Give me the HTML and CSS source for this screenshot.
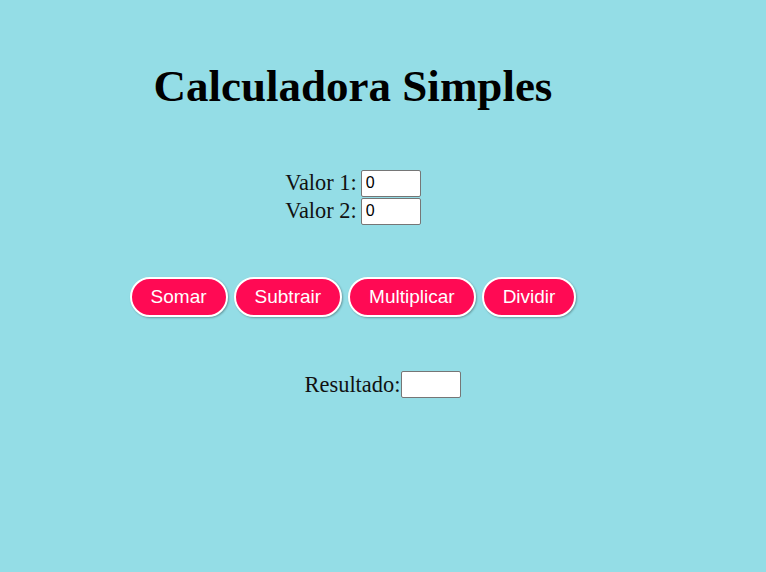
FILE: index.html
```html
<!DOCTYPE html>
<html>
<head>
<meta charset="utf-8">
<link rel="stylesheet" href="styles.css">
</head>
<body>
<div class="calc">
  <h1 class="title">Calculadora Simples</h1>
  <div class="values">
    <div class="row"><label>Valor 1: </label><input class="field" type="text" value="0"></div>
    <div class="row"><label>Valor 2: </label><input class="field" type="text" value="0"></div>
  </div>
  <div class="buttons">
    <button class="btn">Somar</button>
    <button class="btn">Subtrair</button>
    <button class="btn">Multiplicar</button>
    <button class="btn">Dividir</button>
  </div>
  <div class="result"><label>Resultado:</label><input class="field" type="text" value=""></div>
</div>
</body>
</html>
```
FILE: styles.css
```css
html, body {
  margin: 0;
  padding: 0;
  background: #94dde6;
}
body {
  font-family: "Liberation Serif", "Times New Roman", serif;
  color: #111;
}
.calc {
  width: 706px;
  text-align: center;
  padding-top: 59px;
}
.title {
  font-size: 45px;
  font-weight: bold;
  margin: 0 0 56px 0;
  line-height: 1.2;
  color: #000;
}
.values {
  font-size: 22.4px;
}
.row {
  display: flex;
  justify-content: center;
  align-items: center;
  gap: 4px;
  height: 28px;
}
.field {
  width: 60px;
  height: 27px;
  box-sizing: border-box;
  border: 1px solid #767676;
  border-radius: 2px;
  font-family: "Liberation Sans", Arial, sans-serif;
  font-size: 16px;
  padding: 1px 4px;
  background: #fff;
  margin: 0;
}
.buttons {
  display: flex;
  justify-content: center;
  gap: 6px;
  margin-top: 52px;
}
.btn {
  background: #ff0a54;
  color: #fff;
  border: 2px solid #fff;
  border-radius: 20px;
  height: 40px;
  padding: 0 19px;
  font-family: "Liberation Sans", Arial, sans-serif;
  font-size: 19px;
  box-shadow: 1px 1px 2px rgba(0,0,0,0.3);
  margin: 0;
}
.result {
  display: flex;
  justify-content: center;
  align-items: center;
  margin-top: 54px;
  padding-left: 60px;
  font-size: 22.4px;
  gap: 1px;
}
```
